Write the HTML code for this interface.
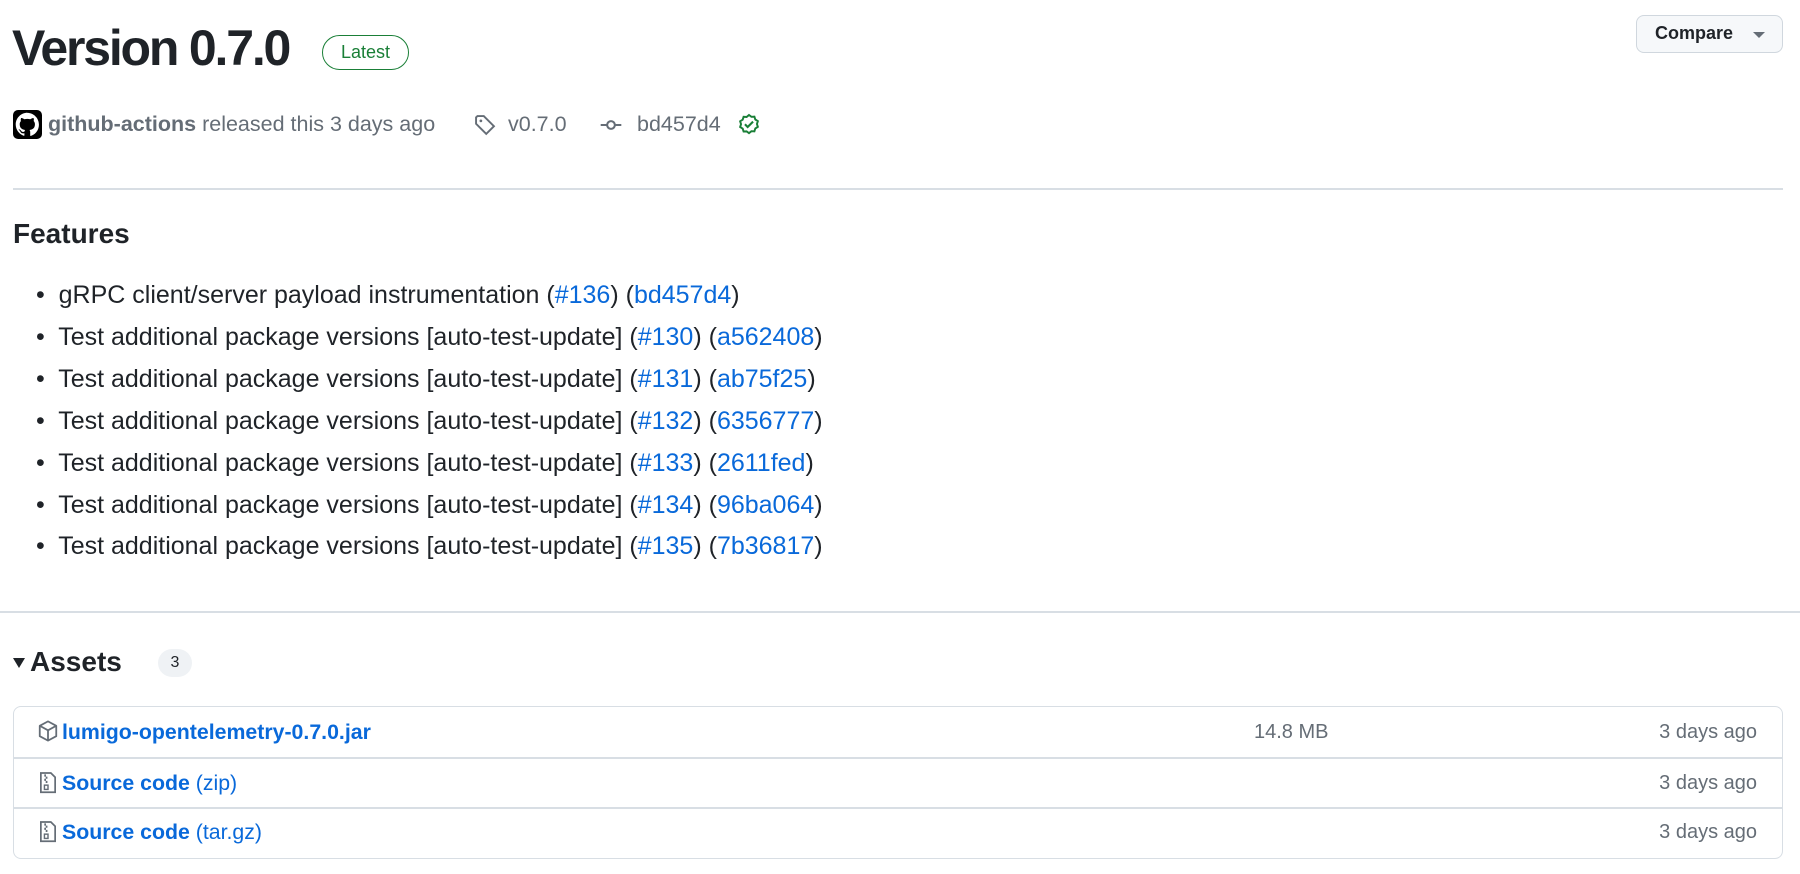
<!DOCTYPE html>
<html><head><meta charset="utf-8"><style>
*{box-sizing:border-box;margin:0;padding:0}
body{width:1800px;height:874px;background:#fff;font-family:"Liberation Sans",sans-serif;color:#1f2328;position:relative;overflow:hidden}
.a{position:absolute;white-space:nowrap}
a{color:#0969da;text-decoration:none}
.gray{color:#656d76}
</style></head><body>
<div class="a" style="left:12px;top:18px;font-size:50px;font-weight:bold;letter-spacing:-2.2px;line-height:60px">Version 0.7.0</div>
<div class="a" style="left:322px;top:35px;width:87px;height:35px;border:1.5px solid #1a7f37;border-radius:18px;color:#1a7f37;font-size:18px;text-align:center;line-height:32px">Latest</div>
<div class="a" style="left:1636px;top:15px;width:147px;height:38px;border:1.5px solid #d0d7de;border-radius:8px;background:#f6f8fa;font-size:18px;font-weight:bold;line-height:35px;padding-left:18px">Compare<span style="position:absolute;left:116px;top:16px;border-left:6px solid transparent;border-right:6px solid transparent;border-top:6px solid #656d76"></span></div>

<div class="a" style="left:13px;top:110px;width:29px;height:29px;background:#000;border-radius:5px">
<svg width="29" height="29" viewBox="0 0 16 16" style="position:absolute;left:0;top:0"><path fill="#fff" d="M8 1.5C4.4 1.5 1.5 4.4 1.5 8c0 2.9 1.9 5.3 4.4 6.2.3.1.4-.1.4-.3v-1.1c-1.8.4-2.2-.8-2.2-.8-.3-.7-.7-.9-.7-.9-.6-.4 0-.4 0-.4.6 0 1 .7 1 .7.6 1 1.5.7 1.9.5.1-.4.2-.7.4-.9-1.4-.2-3-.7-3-3.2 0-.7.3-1.3.7-1.7-.1-.2-.3-.8.1-1.7 0 0 .5-.2 1.8.7.5-.1 1.1-.2 1.6-.2s1.1.1 1.6.2c1.2-.8 1.8-.7 1.8-.7.4.9.1 1.5.1 1.7.4.5.7 1 .7 1.7 0 2.5-1.5 3-3 3.2.2.2.4.6.4 1.2v1.8c0 .2.1.4.4.3 2.6-.9 4.4-3.3 4.4-6.2 0-3.6-2.9-6.5-6.5-6.5z"/></svg></div>
<div class="a gray" style="left:48px;top:111px;font-size:21.5px;line-height:26px"><b>github-actions</b> released this 3 days ago</div>
<svg class="a" style="left:474px;top:114px" width="22" height="22" viewBox="0 0 16 16"><path fill="none" stroke="#656d76" stroke-width="1.4" d="M1.5 2.5v4.6l7.4 7.4 5.6-5.6-7.4-7.4H2.5z"/><circle cx="5" cy="5" r="1" fill="#656d76"/></svg>
<div class="a gray" style="left:508px;top:111px;font-size:21.5px;line-height:26px">v0.7.0</div>
<svg class="a" style="left:599px;top:114px" width="24" height="22" viewBox="0 0 16 16"><circle cx="8" cy="8" r="2.8" fill="none" stroke="#656d76" stroke-width="1.5"/><path stroke="#656d76" stroke-width="1.5" d="M0.5 8h4.7M10.8 8h4.7"/></svg>
<div class="a gray" style="left:637px;top:111px;font-size:21.5px;line-height:26px">bd457d4</div>
<svg class="a" style="left:737px;top:112px" width="24" height="24" viewBox="0 0 16 16"><path fill="none" stroke="#1a7f37" stroke-width="1.3" d="M8 1l1.6 1.2 2-.1.6 1.9 1.7 1.1-.6 1.9.6 1.9-1.7 1.1-.6 1.9-2-.1L8 13.1l-1.6-1.2-2 .1-.6-1.9-1.7-1.1.6-1.9-.6-1.9 1.7-1.1.6-1.9 2 .1z" transform="translate(0 1)"/><path fill="none" stroke="#1a7f37" stroke-width="1.4" d="M5.3 8.2l1.8 1.8 3.6-3.6"/></svg>

<div class="a" style="left:13px;top:188px;width:1770px;height:1.5px;background:#d8dee4"></div>
<div class="a" style="left:13px;top:216px;font-size:28px;font-weight:bold;line-height:36px">Features</div>

<div class="a" style="left:36px;top:275px;font-size:25px;line-height:41.9px">
<div>•&nbsp; gRPC client/server payload instrumentation (<a>#136</a>) (<a>bd457d4</a>)</div>
<div>•&nbsp; Test additional package versions [auto-test-update] (<a>#130</a>) (<a>a562408</a>)</div>
<div>•&nbsp; Test additional package versions [auto-test-update] (<a>#131</a>) (<a>ab75f25</a>)</div>
<div>•&nbsp; Test additional package versions [auto-test-update] (<a>#132</a>) (<a>6356777</a>)</div>
<div>•&nbsp; Test additional package versions [auto-test-update] (<a>#133</a>) (<a>2611fed</a>)</div>
<div>•&nbsp; Test additional package versions [auto-test-update] (<a>#134</a>) (<a>96ba064</a>)</div>
<div>•&nbsp; Test additional package versions [auto-test-update] (<a>#135</a>) (<a>7b36817</a>)</div>
</div>

<div class="a" style="left:0;top:611px;width:1800px;height:1.5px;background:#d8dee4"></div>
<div class="a" style="left:13px;top:658px;border-left:6px solid transparent;border-right:6px solid transparent;border-top:10px solid #1f2328"></div>
<div class="a" style="left:30px;top:644px;font-size:28px;font-weight:bold;line-height:36px">Assets</div>
<div class="a" style="left:158px;top:649px;width:34px;height:28px;border-radius:14px;background:#eff2f5;font-size:16px;text-align:center;line-height:28px">3</div>

<div class="a" style="left:13px;top:706px;width:1770px;height:153px;border:1.5px solid #d8dee4;border-radius:8px"></div>
<div class="a" style="left:14px;top:757px;width:1768px;height:1.5px;background:#d8dee4"></div>
<div class="a" style="left:14px;top:807px;width:1768px;height:1.5px;background:#d8dee4"></div>

<svg class="a" style="left:37px;top:720px" width="22" height="22" viewBox="0 0 16 16"><path fill="none" stroke="#656d76" stroke-width="1.3" stroke-linejoin="round" d="M8 1l6 3.2v7.6L8 15l-6-3.2V4.2zM2 4.2L8 7.5l6-3.3M8 7.5V15"/></svg>
<div class="a" style="left:62px;top:719px;font-size:21.3px;font-weight:bold;line-height:26px"><a>lumigo-opentelemetry-0.7.0.jar</a></div>
<div class="a gray" style="left:1254px;top:719px;font-size:20px;line-height:26px">14.8 MB</div>

<svg class="a" style="left:38px;top:771px" width="20" height="24" viewBox="0 0 14 16"><path fill="none" stroke="#656d76" stroke-width="1.2" d="M2 1h7l3 3v10.5H2z"/><path stroke="#656d76" stroke-width="1.2" d="M5 2v1.5M6 3.5v1.5M5 5v1.5M6 6.5v1.5"/><rect x="4.5" y="9.5" width="2.5" height="3" fill="none" stroke="#656d76" stroke-width="1"/></svg>
<div class="a" style="left:62px;top:770px;font-size:21.3px;line-height:26px"><a><b>Source code</b> (zip)</a></div>

<svg class="a" style="left:38px;top:820px" width="20" height="24" viewBox="0 0 14 16"><path fill="none" stroke="#656d76" stroke-width="1.2" d="M2 1h7l3 3v10.5H2z"/><path stroke="#656d76" stroke-width="1.2" d="M5 2v1.5M6 3.5v1.5M5 5v1.5M6 6.5v1.5"/><rect x="4.5" y="9.5" width="2.5" height="3" fill="none" stroke="#656d76" stroke-width="1"/></svg>
<div class="a" style="left:62px;top:819px;font-size:21.3px;line-height:26px"><a><b>Source code</b> (tar.gz)</a></div>

<div class="a gray" style="right:43px;top:719px;font-size:20px;line-height:26px">3 days ago</div>
<div class="a gray" style="right:43px;top:770px;font-size:20px;line-height:26px">3 days ago</div>
<div class="a gray" style="right:43px;top:819px;font-size:20px;line-height:26px">3 days ago</div>
</body></html>
